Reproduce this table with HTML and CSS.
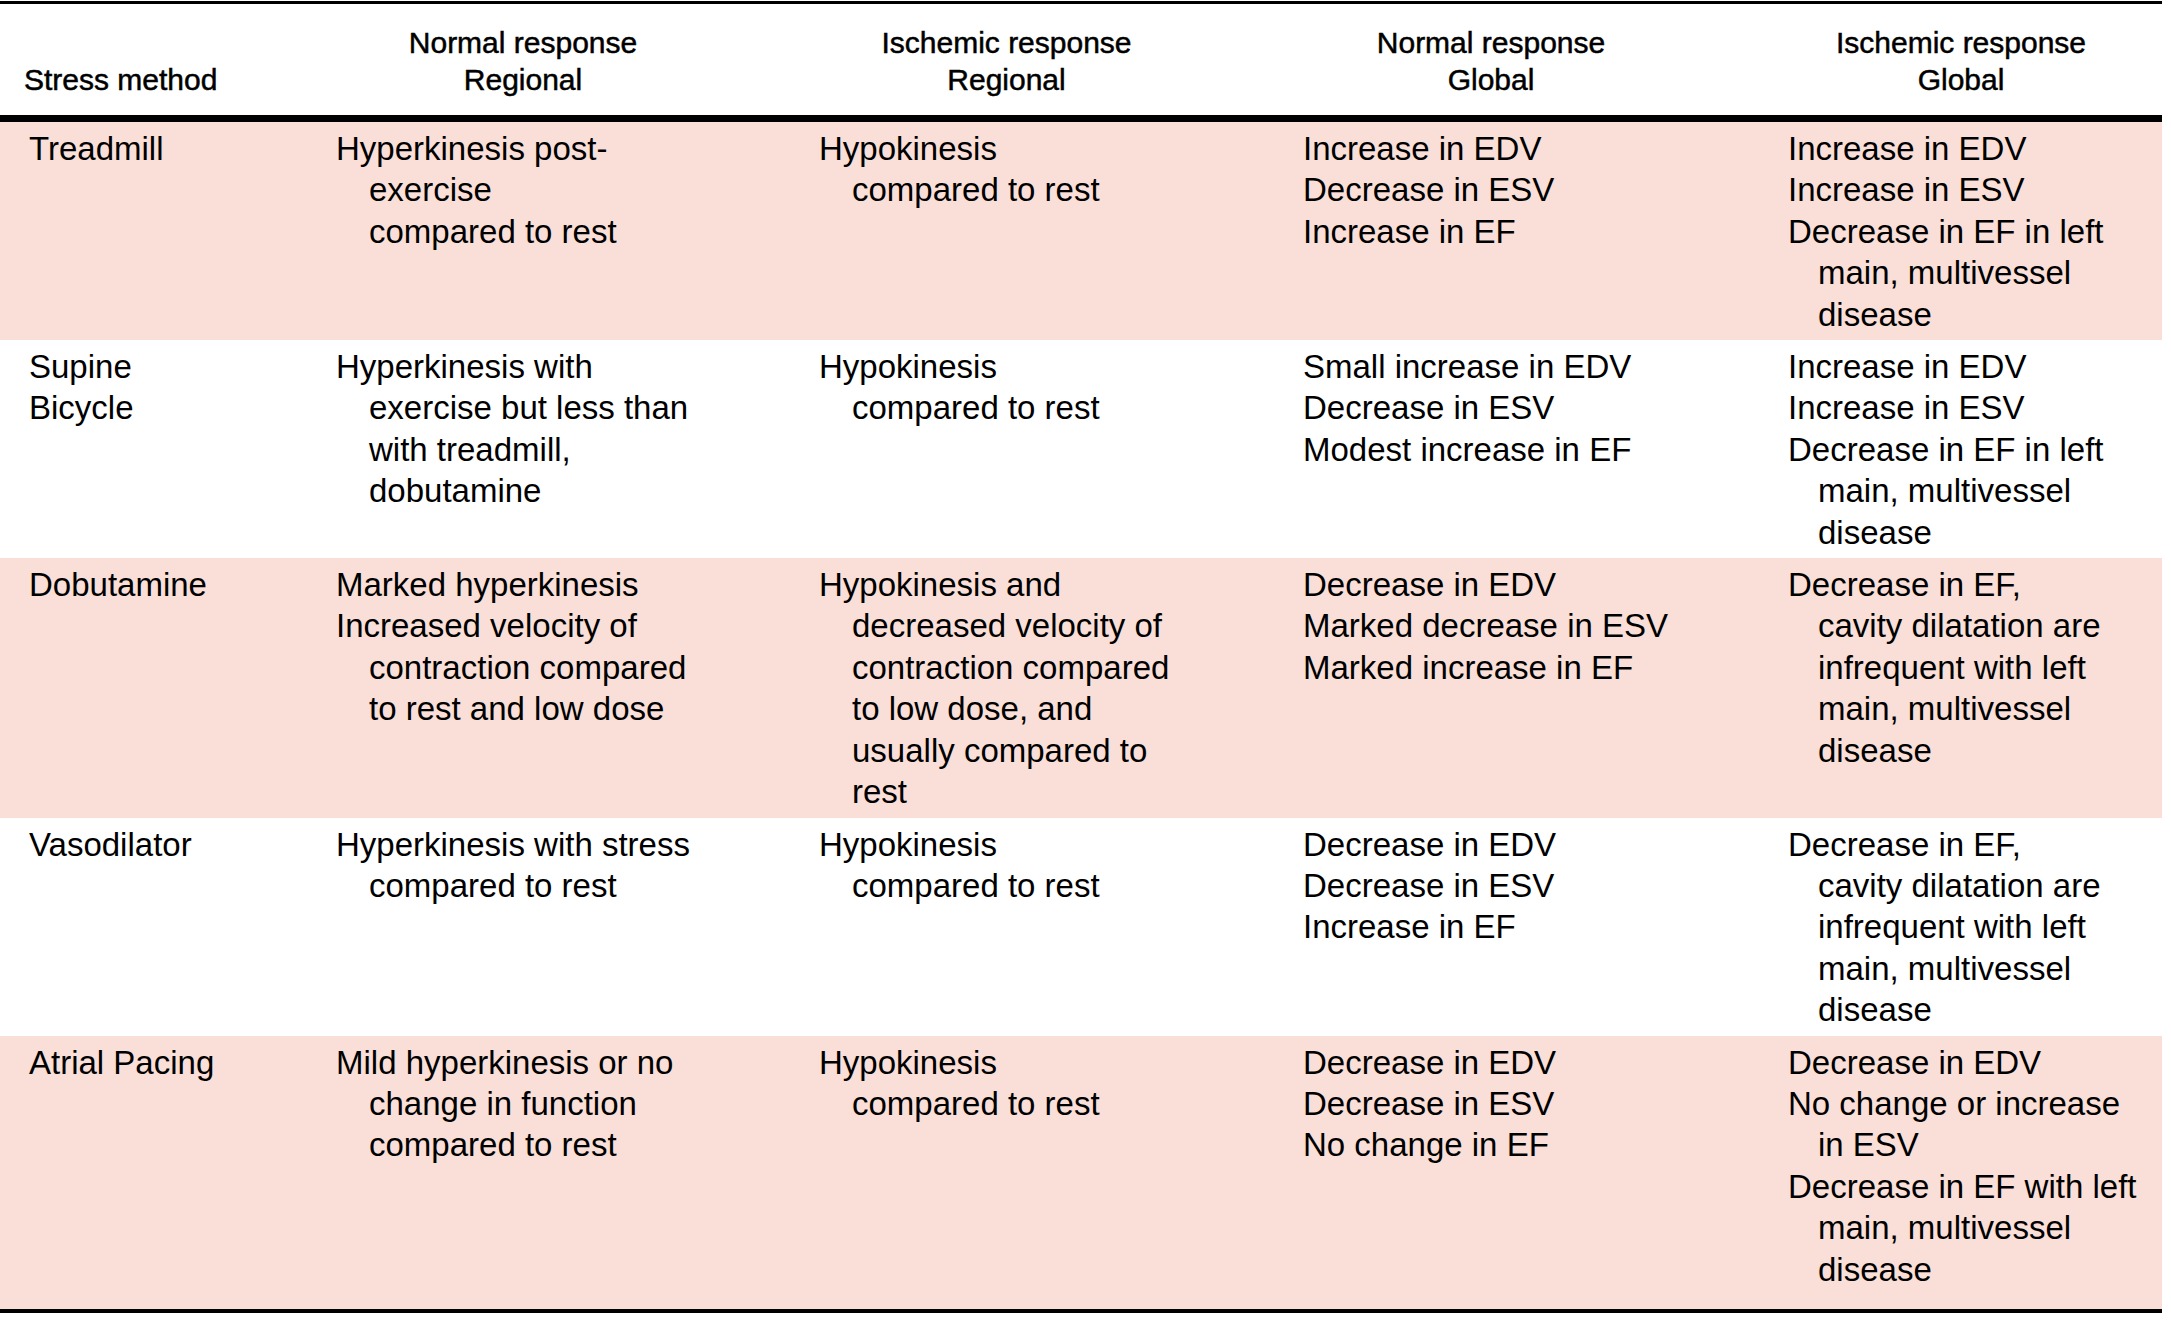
FILE: index.html
```html
<!DOCTYPE html>
<html lang="en">
<head>
<meta charset="utf-8">
<title>Stress echocardiography responses</title>
<link rel="stylesheet" href="styles.css">
</head>
<body>
<div class="table">
  <div class="head">
    <div class="hc hc-first">Stress method</div>
    <div class="hc">Normal response<br>Regional</div>
    <div class="hc">Ischemic response<br>Regional</div>
    <div class="hc">Normal response<br>Global</div>
    <div class="hc hc-last">Ischemic response<br>Global</div>
  </div>

  <div class="row shaded">
    <div class="cell"><p class="item">Treadmill</p></div>
    <div class="cell"><p class="item">Hyperkinesis post-<br>exercise<br>compared to rest</p></div>
    <div class="cell"><p class="item">Hypokinesis<br>compared to rest</p></div>
    <div class="cell">
      <p class="item">Increase in EDV</p>
      <p class="item">Decrease in ESV</p>
      <p class="item">Increase in EF</p>
    </div>
    <div class="cell cell-last">
      <p class="item">Increase in EDV</p>
      <p class="item">Increase in ESV</p>
      <p class="item">Decrease in EF in left<br>main, multivessel<br>disease</p>
    </div>
  </div>

  <div class="row">
    <div class="cell"><p class="item">Supine</p><p class="item">Bicycle</p></div>
    <div class="cell"><p class="item">Hyperkinesis with<br>exercise but less than<br>with treadmill,<br>dobutamine</p></div>
    <div class="cell"><p class="item">Hypokinesis<br>compared to rest</p></div>
    <div class="cell">
      <p class="item">Small increase in EDV</p>
      <p class="item">Decrease in ESV</p>
      <p class="item">Modest increase in EF</p>
    </div>
    <div class="cell cell-last">
      <p class="item">Increase in EDV</p>
      <p class="item">Increase in ESV</p>
      <p class="item">Decrease in EF in left<br>main, multivessel<br>disease</p>
    </div>
  </div>

  <div class="row shaded">
    <div class="cell"><p class="item">Dobutamine</p></div>
    <div class="cell">
      <p class="item">Marked hyperkinesis</p>
      <p class="item">Increased velocity of<br>contraction compared<br>to rest and low dose</p>
    </div>
    <div class="cell"><p class="item">Hypokinesis and<br>decreased velocity of<br>contraction compared<br>to low dose, and<br>usually compared to<br>rest</p></div>
    <div class="cell">
      <p class="item">Decrease in EDV</p>
      <p class="item">Marked decrease in ESV</p>
      <p class="item">Marked increase in EF</p>
    </div>
    <div class="cell cell-last">
      <p class="item">Decrease in EF,<br>cavity dilatation are<br>infrequent with left<br>main, multivessel<br>disease</p>
    </div>
  </div>

  <div class="row">
    <div class="cell"><p class="item">Vasodilator</p></div>
    <div class="cell"><p class="item">Hyperkinesis with stress<br>compared to rest</p></div>
    <div class="cell"><p class="item">Hypokinesis<br>compared to rest</p></div>
    <div class="cell">
      <p class="item">Decrease in EDV</p>
      <p class="item">Decrease in ESV</p>
      <p class="item">Increase in EF</p>
    </div>
    <div class="cell cell-last">
      <p class="item">Decrease in EF,<br>cavity dilatation are<br>infrequent with left<br>main, multivessel<br>disease</p>
    </div>
  </div>

  <div class="row shaded row-end">
    <div class="cell"><p class="item">Atrial Pacing</p></div>
    <div class="cell"><p class="item">Mild hyperkinesis or no<br>change in function<br>compared to rest</p></div>
    <div class="cell"><p class="item">Hypokinesis<br>compared to rest</p></div>
    <div class="cell">
      <p class="item">Decrease in EDV</p>
      <p class="item">Decrease in ESV</p>
      <p class="item">No change in EF</p>
    </div>
    <div class="cell cell-last">
      <p class="item">Decrease in EDV</p>
      <p class="item">No change or increase<br>in ESV</p>
      <p class="item">Decrease in EF with left<br>main, multivessel<br>disease</p>
    </div>
  </div>
</div>
</body>
</html>
```

FILE: styles.css
```css
html, body {
  margin: 0;
  padding: 0;
  background: #ffffff;
}

body {
  font-family: "Liberation Sans", Arial, Helvetica, sans-serif;
  color: #000000;
}

.table {
  --cols: 307px 483px 484px 485px 1fr;
  width: 2162px;
  margin-top: 1px;
  border-top: 3px solid #000000;
  border-bottom: 4px solid #000000;
}

.head {
  display: grid;
  grid-template-columns: var(--cols);
  align-items: end;
  padding: 20px 0 17px 0;
  border-bottom: 7px solid #000000;
  font-size: 30px;
  line-height: 37px;
  -webkit-text-stroke: 0.5px #000000;
}

.hc {
  text-align: center;
  padding: 0 80px 0 29px;
  white-space: nowrap;
}

.hc-first {
  text-align: left;
  padding: 0 0 0 24px;
}

.hc-last {
  padding: 0 28px 0 29px;
}

.row {
  display: grid;
  grid-template-columns: var(--cols);
  padding: 6px 0 5px 0;
  font-size: 33px;
  line-height: 41.4px;
}

.shaded {
  background: #f9dfd7;
}

.row-end {
  padding-bottom: 19px;
}

.cell {
  padding-left: 29px;
}

.item {
  margin: 0;
  padding-left: 33px;
  text-indent: -33px;
  white-space: nowrap;
}

.cell-last .item {
  padding-left: 30px;
  text-indent: -30px;
}
```
